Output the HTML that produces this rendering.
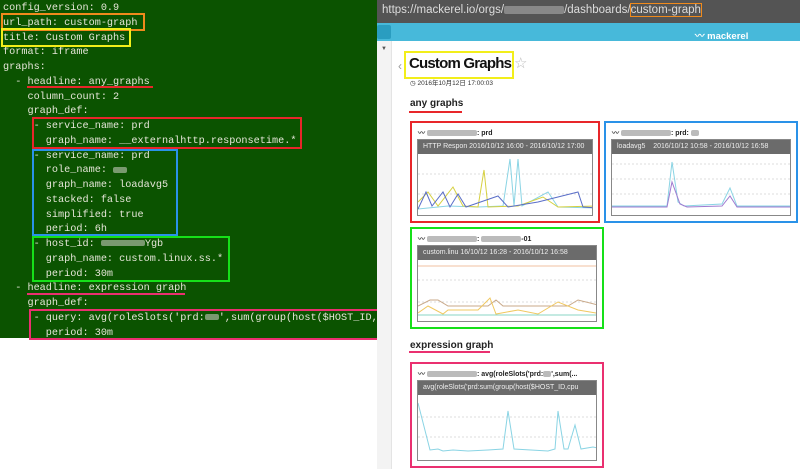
<!DOCTYPE html><html><head><style>
body{margin:0;width:800px;height:469px;overflow:hidden;background:#fff;font-family:"Liberation Sans",sans-serif;position:relative}
.a{position:absolute}
#code{left:0;top:0;width:377px;height:338px;background:#0b5300;font-family:"Liberation Mono",monospace;font-size:10.2px;color:#e6e6d8;line-height:14.76px;padding-top:2px;box-sizing:border-box;white-space:pre}
#code div{padding-left:3px;height:14.76px}
.box{position:absolute;border:2px solid}
.card{position:absolute}
.ct{font-size:7px;font-weight:bold;color:#222;position:absolute;left:6px;top:5px;white-space:nowrap}
.pn{position:absolute;left:5px;top:16px;right:5px;bottom:5px;border:1px solid #888;background:#fff;overflow:hidden}
.ph{height:14px;background:#6b6b6b;color:#eee;font-size:7px;line-height:14px;padding-left:5px;white-space:nowrap;overflow:hidden}
.blur{display:inline-block;background:#bbb;height:6px;vertical-align:middle;border-radius:2px}
</style></head><body>
<div class="a" style="left:377px;top:0;width:423px;height:23px;background:#545454"></div>
<div class="a" style="left:382px;top:4px;font-size:11.5px;color:#ddd;white-space:nowrap">https://mackerel.io/orgs/<span class="blur" style="width:60px;background:#888;height:8px"></span>/dashboards/<span style="outline:1px solid #f08a1c">custom-graph</span></div>
<div class="a" style="left:377px;top:23px;width:423px;height:18px;background:#47b9da"></div>
<div class="a" style="left:377px;top:25px;width:14px;height:14px;background:#2a9dc0;border-radius:2px"></div>
<div class="a" style="left:695px;top:28px;color:#fff;font-size:9.5px;font-weight:bold">〰 mackerel</div>
<div class="a" style="left:377px;top:41px;width:14px;height:428px;background:#f3f3f3;border-right:1px solid #e4e4e4"></div>
<div class="a" style="left:381px;top:46px;font-size:6px;color:#555">▼</div>
<div id="code" class="a"><div>config_version: 0.9</div><div>url_path: custom-graph</div><div>title: Custom Graphs</div><div>format: iframe</div><div>graphs:</div><div>  - headline: any_graphs</div><div>    column_count: 2</div><div>    graph_def:</div><div>     - service_name: prd</div><div>       graph_name: __externalhttp.responsetime.*</div><div>     - service_name: prd</div><div>       role_name: <span class="blur" style="width:14px;background:#7a9a70"></span></div><div>       graph_name: loadavg5</div><div>       stacked: false</div><div>       simplified: true</div><div>       period: 6h</div><div>     - host_id: <span class="blur" style="width:44px;background:#7a9a70"></span>Ygb</div><div>       graph_name: custom.linux.ss.*</div><div>       period: 30m</div><div>  - headline: expression graph</div><div>    graph_def:</div><div>     - query: avg(roleSlots('prd:<span class="blur" style="width:14px;background:#7a9a70"></span>',sum(group(host($HOST_ID,</div><div>       period: 30m</div></div>
<div class="box" style="left:1px;top:13px;width:140px;height:14px;border-color:#f08a1c"></div>
<div class="box" style="left:1px;top:28px;width:126px;height:15px;border-color:#f2ee1a"></div>
<div class="a" style="left:27px;top:86px;width:126px;height:2px;background:#e8262a"></div>
<div class="box" style="left:32px;top:117px;width:266px;height:28px;border-color:#e8262a"></div>
<div class="box" style="left:32px;top:149px;width:142px;height:83px;border-color:#2a92e8"></div>
<div class="box" style="left:32px;top:236px;width:194px;height:42px;border-color:#16e019"></div>
<div class="a" style="left:27px;top:293px;width:158px;height:2px;background:#ea3070"></div>
<div class="box" style="left:29px;top:309px;width:346px;height:27px;border-color:#ea3070;border-right:none"></div>

<div class="a" style="left:398px;top:59px;color:#999;font-size:12px">‹</div>
<div class="box" style="left:404px;top:51px;width:106px;height:24px;border-color:#f2ee1a"></div>
<div class="a" style="left:409px;top:55px;font-size:15px;font-weight:bold;color:#111;letter-spacing:-0.8px">Custom Graphs</div>
<div class="a" style="left:514px;top:54px;font-size:15px;color:#bbb">☆</div>
<div class="a" style="left:410px;top:77px;font-size:6.5px;color:#333;font-family:'Liberation Sans','Noto Sans CJK JP',sans-serif">◷ 2016年10月12日 17:00:03</div>
<div class="a" style="left:410px;top:98px;font-size:10px;font-weight:bold;color:#222">any graphs</div>
<div class="a" style="left:409px;top:111px;width:53px;height:2px;background:#e8262a"></div>

<div class="card" style="left:410px;top:121px;width:190px;height:102px;border:2px solid #e8262a;box-sizing:border-box">
<div class="ct">〰 <span class="blur" style="width:50px"></span>: prd</div>
<div class="pn"><div class="ph">HTTP Respon 2016/10/12 16:00 - 2016/10/12 17:00</div>
<svg width="180" height="64" style="display:block"><g stroke="#ddd" stroke-dasharray="2 2"><line x1="0" y1="20" x2="180" y2="20"/><line x1="0" y1="40" x2="180" y2="40"/></g>
<polyline fill="none" stroke="#8ad4e4" points="0,55 30,52 60,53 85,52 92,5 96,52 100,5 104,52 130,38 140,53 180,54"/>
<polyline fill="none" stroke="#d6d040" points="0,48 10,38 20,52 35,33 45,52 60,53 66,16 70,53 100,52 125,43 140,53 180,52"/>
<polyline fill="none" stroke="#5a6ec8" points="0,55 8,38 14,52 25,38 32,53 40,40 48,53 80,42 90,53 120,48 160,38 165,53 180,54"/></svg></div></div>

<div class="card" style="left:604px;top:121px;width:194px;height:102px;border:2px solid #2a92e8;box-sizing:border-box">
<div class="ct">〰 <span class="blur" style="width:50px"></span>: prd: <span class="blur" style="width:8px"></span></div>
<div class="pn"><div class="ph">loadavg5 &nbsp;&nbsp;&nbsp;2016/10/12 10:58 - 2016/10/12 16:58</div>
<svg width="184" height="64" style="display:block"><g stroke="#ddd" stroke-dasharray="2 2"><line x1="0" y1="10" x2="184" y2="10"/><line x1="0" y1="25" x2="184" y2="25"/><line x1="0" y1="40" x2="184" y2="40"/></g>
<polyline fill="none" stroke="#8ad4e4" points="0,52 55,52 60,8 66,48 72,52 110,50 118,34 125,52 184,52"/>
<polyline fill="none" stroke="#a07ad0" points="0,53 55,53 60,28 68,50 75,53 110,52 118,42 125,53 184,53"/></svg></div></div>

<div class="card" style="left:410px;top:227px;width:194px;height:102px;border:2px solid #16e019;box-sizing:border-box">
<div class="ct">〰 <span class="blur" style="width:50px"></span>: <span class="blur" style="width:40px"></span>-01</div>
<div class="pn"><div class="ph">custom.linu 16/10/12 16:28 - 2016/10/12 16:58</div>
<svg width="184" height="64" style="display:block"><line x1="0" y1="6" x2="184" y2="6" stroke="#f0c0a0"/><g stroke="#ddd" stroke-dasharray="2 2"><line x1="0" y1="20" x2="184" y2="20"/><line x1="0" y1="42" x2="184" y2="42"/></g>
<polyline fill="none" stroke="#c8a888" points="0,46 12,40 20,40 30,46 70,46 78,40 85,46 150,46 160,40 184,46 "/>
<polyline fill="none" stroke="#f0c860" points="0,53 10,46 25,54 30,50 60,50 72,38 78,54 100,50 120,54 140,42 160,50 184,54"/>
<line x1="0" y1="55" x2="184" y2="55" stroke="#8ad4c4"/></svg></div></div>

<div class="a" style="left:410px;top:340px;font-size:10px;font-weight:bold;color:#222">expression graph</div>
<div class="a" style="left:409px;top:351px;width:81px;height:2px;background:#ea3070"></div>
<div class="card" style="left:410px;top:362px;width:194px;height:106px;border:2px solid #ea3070;box-sizing:border-box">
<div class="ct">〰 <span class="blur" style="width:50px"></span>: avg(roleSlots('prd:<span class="blur" style="width:8px"></span>',sum(...</div>
<div class="pn"><div class="ph">avg(roleSlots('prd:sum(group(host($HOST_ID,cpu</div>
<svg width="184" height="68" style="display:block"><g stroke="#ddd" stroke-dasharray="2 2"><line x1="0" y1="22" x2="184" y2="22"/><line x1="0" y1="42" x2="184" y2="42"/></g>
<polyline fill="none" stroke="#8ad4e4" points="0,8 12,55 20,54 25,56 35,55 50,56 70,55 85,54 90,16 96,54 130,56 137,54 140,16 146,54 150,54 157,30 163,54 175,52 184,54"/></svg></div></div>
</body></html>
